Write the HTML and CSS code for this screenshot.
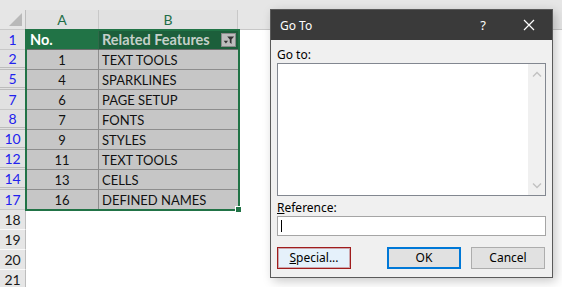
FILE: index.html
```html
<!DOCTYPE html>
<html>
<head>
<meta charset="utf-8">
<link rel="stylesheet" href="styles.css">
</head>
<body>
<div class="screen">
  <div class="sheet">
    <div class="band"></div>
    <div class="row hdr">
      <div class="rh corner"><span class="tri"></span></div>
      <div class="ch cola">A</div>
      <div class="ch colb">B</div>
      <div class="ch rest"></div>
    </div>
    <div class="row">
      <div class="rh sel">1</div>
      <div class="c a h1a">No.</div>
      <div class="c b h1b"><span>Related Features</span>
        <span class="filter"><svg width="15" height="14" viewBox="0 0 15 14"><path d="M2 8h5l-2.5 3z" fill="#333"/><path d="M6 3h8l-3 3.5v5l-2 -1.5v-3.5z" fill="#333"/></svg></span>
      </div>
      <div class="c rest"></div>
    </div>
    <div class="row"><div class="rh sel gap">2</div><div class="c a">1</div><div class="c b">TEXT TOOLS</div><div class="c rest"></div></div>
    <div class="row"><div class="rh sel gap">5</div><div class="c a">4</div><div class="c b">SPARKLINES</div><div class="c rest"></div></div>
    <div class="row"><div class="rh sel">7</div><div class="c a">6</div><div class="c b">PAGE SETUP</div><div class="c rest"></div></div>
    <div class="row"><div class="rh sel gap">8</div><div class="c a">7</div><div class="c b">FONTS</div><div class="c rest"></div></div>
    <div class="row"><div class="rh sel gap">10</div><div class="c a">9</div><div class="c b">STYLES</div><div class="c rest"></div></div>
    <div class="row"><div class="rh sel gap">12</div><div class="c a">11</div><div class="c b">TEXT TOOLS</div><div class="c rest"></div></div>
    <div class="row"><div class="rh sel gap">14</div><div class="c a">13</div><div class="c b">CELLS</div><div class="c rest"></div></div>
    <div class="row"><div class="rh sel">17</div><div class="c a last">16</div><div class="c b last">DEFINED NAMES</div><div class="c rest"></div></div>
    <div class="row"><div class="rh">18</div><div class="c blank"></div></div>
    <div class="row"><div class="rh">19</div><div class="c blank"></div></div>
    <div class="row"><div class="rh">20</div><div class="c blank"></div></div>
    <div class="row"><div class="rh">21</div><div class="c blank"></div></div>
  </div>

  <div class="selbox"><span class="handle"></span></div>

  <div class="dialog">
    <div class="titlebar">
      <span class="title">Go To</span>
      <span class="help">?</span>
      <span class="close"><svg width="12" height="12" viewBox="0 0 12 12"><path d="M1 1L11 11M11 1L1 11" stroke="#fff" stroke-width="1.2"/></svg></span>
    </div>
    <div class="dbody">
      <div class="label">Go to:</div>
      <div class="listbox">
        <div class="listarea"></div>
        <div class="scroll">
          <svg width="10" height="6" viewBox="0 0 10 6"><path d="M1 5.5L5 1.5L9 5.5" fill="none" stroke="#c2c2c2" stroke-width="1.4"/></svg>
          <svg width="10" height="6" viewBox="0 0 10 6"><path d="M1 0.5L5 4.5L9 0.5" fill="none" stroke="#c2c2c2" stroke-width="1.4"/></svg>
        </div>
      </div>
      <div class="label ref"><u>R</u>eference:</div>
      <div class="input"><span class="caret"></span></div>
      <div class="buttons">
        <button class="btn special"><u>S</u>pecial...</button>
        <div class="btngroup">
          <button class="btn ok">OK</button>
          <button class="btn">Cancel</button>
        </div>
      </div>
    </div>
  </div>
</div>
</body>
</html>
```

FILE: styles.css
```css
html, body {
  margin: 0;
  padding: 0;
  background: #fff;
}
.screen {
  position: relative;
  width: 562px;
  height: 287px;
  overflow: hidden;
  font-family: Lato, "Liberation Sans", sans-serif;
  font-size: 14px;
}
.sheet {
  display: flex;
  flex-direction: column;
}
.band {
  height: 10px;
  background: #e6e6e6;
}
.row {
  display: flex;
  height: 20px;
}
.hdr {
  background: #e6e6e6;
  border-bottom: 1px solid #c8c8c8;
  box-sizing: border-box;
}
.rh {
  width: 26px;
  flex: none;
  box-sizing: border-box;
  background: #e6e6e6;
  border-right: 1px solid #bdbdbd;
  border-bottom: 1px solid #fafafa;
  color: #1a1a1a;
  text-align: center;
  line-height: 19px;
}
.corner {
  position: relative;
  border-bottom: none;
}
.tri {
  position: absolute;
  right: 3px;
  bottom: 3px;
  width: 0;
  height: 0;
  border-left: 13px solid transparent;
  border-bottom: 13px solid #b9b9b9;
}
.rh.sel {
  background: #e1e1e1;
  color: #2222ee;
  border-bottom: 1px solid #c8c8c8;
}
.rh.gap {
  border-bottom: 3px double #bcbcbc;
  line-height: 17px;
}
.ch {
  box-sizing: border-box;
  text-align: center;
  line-height: 19px;
  color: #1f6e47;
  background: #e1e1e1;
  border-right: 1px solid #c8c8c8;
}
.cola { width: 73px; }
.colb { width: 139px; }
.ch.rest {
  flex: 1;
  background: #e6e6e6;
  border-right: none;
}
.c {
  box-sizing: border-box;
  height: 20px;
  line-height: 20px;
  color: #111;
  font-size: 13px;
}
.a {
  width: 73px;
  background: #c6c6c6;
  border-right: 1px solid #8d8d8d;
  border-bottom: 1px solid #8d8d8d;
  text-align: center;
}
.b {
  width: 139px;
  background: #c6c6c6;
  border-bottom: 1px solid #8d8d8d;
  padding-left: 3px;
}
.last { border-bottom: none; }
.c.rest, .c.blank { flex: 1; }
.h1a {
  background: #217346;
  color: #fff;
  font-weight: bold;
  font-size: 14.5px;
  text-align: left;
  padding-left: 4px;
  border-right-color: #2f6a49;
  border-bottom-color: #6d6d6d;
}
.h1b {
  background: #1c5f3b;
  color: #c5cfc9;
  font-weight: bold;
  font-size: 14.5px;
  display: flex;
  align-items: center;
  justify-content: space-between;
  padding-right: 2px;
  border-bottom-color: #6d6d6d;
}
.filter {
  width: 15px;
  height: 14px;
  box-sizing: border-box;
  background: #bdbdbd;
  border: 1px solid #8a8a8a;
  display: flex;
  align-items: center;
  justify-content: center;
}
.filter svg { display: block; }

.selbox {
  position: absolute;
  left: 25px;
  top: 29px;
  width: 215px;
  height: 182px;
  box-sizing: border-box;
  border: 2px solid #217346;
  pointer-events: none;
}
.handle {
  position: absolute;
  right: -4px;
  bottom: -4px;
  width: 5px;
  height: 5px;
  background: #217346;
  border: 1px solid #fff;
}

.dialog {
  position: absolute;
  left: 270px;
  top: 9px;
  width: 283px;
  height: 269px;
  box-sizing: border-box;
  border: 1px solid #5a5a5a;
  background: #f0f0f0;
  box-shadow: 3px 3px 10px rgba(0, 0, 0, 0.22);
  font-family: "Noto Sans", "Open Sans", sans-serif;
  font-size: 12px;
  color: #000;
  display: flex;
  flex-direction: column;
}
.titlebar {
  height: 30px;
  flex: none;
  background: #3a3a3a;
  color: #fff;
  display: flex;
  align-items: center;
  padding-left: 9px;
}
.title {
  flex: 1;
  font-size: 12px;
}
.help {
  width: 46px;
  text-align: center;
  font-size: 13px;
}
.close {
  width: 46px;
  display: flex;
  justify-content: center;
}
.close svg { display: block; }
.dbody {
  padding: 7px 6px 0 6px;
  display: flex;
  flex-direction: column;
}
.label {
  height: 16px;
  line-height: 16px;
}
.listbox {
  height: 133px;
  box-sizing: border-box;
  border: 1px solid #828790;
  background: #fff;
  display: flex;
}
.listarea { flex: 1; }
.scroll {
  width: 17px;
  background: #f0f0f0;
  display: flex;
  flex-direction: column;
  justify-content: space-between;
  align-items: center;
  padding: 7px 0 6px;
}
.scroll svg { display: block; }
.ref {
  margin-top: 4px;
  height: 16px;
}
.input {
  height: 20px;
  margin-top: 0;
  box-sizing: border-box;
  border: 1px solid #a5a5a5;
  background: #fff;
  position: relative;
}
.caret {
  position: absolute;
  left: 3px;
  top: 3px;
  width: 1px;
  height: 12px;
  background: #000;
}
.buttons {
  margin-top: 11px;
  display: flex;
  justify-content: space-between;
  padding-right: 1px;
}
.btngroup {
  display: flex;
  gap: 10px;
}
.btn {
  width: 74px;
  height: 22px;
  box-sizing: border-box;
  border: 1px solid #adadad;
  background: #e1e1e1;
  font-family: "Noto Sans", "Open Sans", sans-serif;
  font-size: 12px;
  color: #000;
  padding: 0;
  line-height: 18px;
}
.special {
  background: #e5f1fb;
  border: 1px solid #a01c1c;
  box-shadow: inset 0 0 0 1px rgba(160, 28, 28, 0.35);
}
.ok {
  border: 2px solid #0078d7;
}
```
